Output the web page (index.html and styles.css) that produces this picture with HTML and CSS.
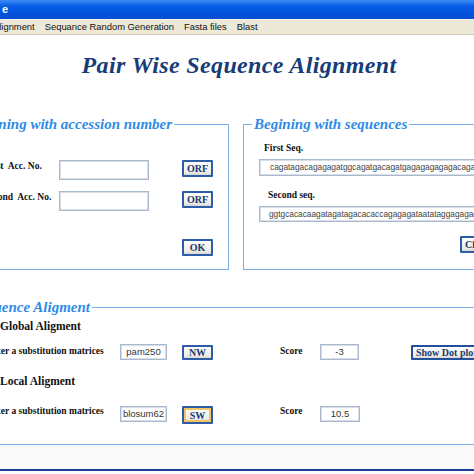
FILE: index.html
```html
<!DOCTYPE html>
<html>
<head>
<meta charset="utf-8">
<link rel="stylesheet" href="styles.css">
</head>
<body>
<div class="titlebar"><span class="title-end">e</span></div>
<div class="menubar">
  <span class="menu-item first">Alignment</span>
  <span class="menu-item">Sequance Random Generation</span>
  <span class="menu-item">Fasta files</span>
  <span class="menu-item">Blast</span>
</div>
<h1 class="heading">Pair Wise Sequence Alignment</h1>
<div class="top-row">
  <fieldset class="box box-acc">
    <legend>Begining with accession number</legend>
    <div class="acc-row">
      <span class="lbl acc-lbl">First&nbsp; Acc. No.</span>
      <span class="field acc-field"></span>
      <button class="btn orf">ORF</button>
    </div>
    <div class="acc-row second">
      <span class="lbl acc-lbl">Second&nbsp; Acc. No.</span>
      <span class="field acc-field"></span>
      <button class="btn orf">ORF</button>
    </div>
    <div class="ok-row">
      <button class="btn orf">OK</button>
    </div>
  </fieldset>
  <fieldset class="box box-seq">
    <legend>Begining with sequences</legend>
    <div class="lbl seq-lbl1">First Seq.</div>
    <div class="field seq-field">cagatagacagagagatggcagatgacagatgagagagagagacagagagacagatag</div>
    <div class="lbl seq-lbl2">Second seq.</div>
    <div class="field seq-field seq2">ggtgcacacaagatagatagacacaccagagagataatataggagagagcacagatag</div>
    <button class="btn clear">Clear</button>
  </fieldset>
</div>
<fieldset class="box box-align">
  <legend>Sequence Aligment</legend>
  <div class="sect">Global Aligment</div>
  <div class="align-row">
    <span class="lbl mat-lbl">Enter a substitution matrices</span>
    <span class="field small">pam250</span>
    <button class="btn nw">NW</button>
    <span class="lbl score">Score</span>
    <span class="field score-val">-3</span>
    <button class="btn dot">Show Dot plot</button>
  </div>
  <div class="sect local">Local Aligment</div>
  <div class="align-row row2">
    <span class="lbl mat-lbl">Enter a substitution matrices</span>
    <span class="field small">blosum62</span>
    <button class="btn nw sw">SW</button>
    <span class="lbl score">Score</span>
    <span class="field score-val">10.5</span>
  </div>
</fieldset>
<div class="footer"></div>
</body>
</html>
```
FILE: styles.css
```css
html, body {
  margin: 0;
  padding: 0;
  background: #ffffff;
  overflow: hidden;
  width: 474px;
  height: 474px;
}
body {
  font-family: "Liberation Serif", serif;
  color: #000;
}
.titlebar {
  height: 19px;
  background: linear-gradient(#3d8ef5 0%, #0a5fe6 30%, #0052dc 70%, #0a4fd0 100%);
  color: #fff;
  font: bold 11px/19px "Liberation Sans", sans-serif;
  padding-left: 2px;
}
.menubar {
  height: 14px;
  background: #ece9d8;
  border-bottom: 1px solid #cfcbbb;
  display: flex;
  gap: 10px;
  font: 9.4px/14px "Liberation Sans", sans-serif;
  color: #111;
  white-space: nowrap;
  border-top: 1px solid #f4f2e8;
}
.menu-item.first { margin-left: -7px; }
.heading {
  margin: 15px 0 0 0;
  text-align: center;
  font: italic bold 24px/30px "Liberation Serif", serif;
  color: #173c78;
  letter-spacing: 0.35px;
  padding-left: 4px;
}
.top-row {
  display: flex;
  gap: 14px;
  margin-top: 36px;
  white-space: nowrap;
}
.box {
  margin: 0;
  border: 1px solid #7bb1e4;
  padding: 0;
  min-width: 0;
}
.box legend {
  padding: 0 2px;
  font: italic bold 15px/16px "Liberation Serif", serif;
  color: #2e8be6;
}
.box-acc {
  margin-left: -36px;
  width: 265px;
  box-sizing: border-box;
  padding: 28px 0 13px 19px;
  flex: none;
}
.box-acc legend { margin-left: -16px; }
.lbl {
  font: bold 9.5px/12px "Liberation Serif", serif;
  color: #111;
}
.acc-row {
  display: flex;
  align-items: flex-start;
}
.acc-row.second { margin-top: 11px; }
.acc-lbl { width: 75px; flex: none; }
.field {
  box-sizing: border-box;
  border: 1px solid #a9b8ca;
  box-shadow: inset 0 0 0 1px #d7dee8;
  background: #fff;
  font: 9px "Liberation Sans", sans-serif;
  color: #333;
  display: block;
  flex: none;
  white-space: nowrap;
  overflow: hidden;
}
.acc-field { width: 90px; height: 20px; }
.btn {
  box-sizing: border-box;
  border: 2px solid #2d5ca8;
  border-radius: 1px;
  background: linear-gradient(#ffffff, #ecebe6 80%, #d8d6cf);
  font: bold 10px "Liberation Serif", serif;
  color: #1b3a6e;
  padding: 0;
  flex: none;
}
.orf { width: 31px; height: 17px; margin-left: 33px; }
.ok-row { margin-top: 26px; padding-left: 198px; }
.ok-row .orf { margin-left: 0; }
.box-seq {
  width: 260px;
  box-sizing: border-box;
  padding: 0 0 13px 15px;
  flex: none;
}
.box-seq legend { margin-left: -7px; }
.seq-lbl1 { margin: 10px 0 0 5px; }
.seq-lbl2 { margin: 13px 0 0 9px; }
.seq-field {
  width: 240px;
  height: 17px;
  margin-top: 5px;
  line-height: 15px;
  padding-left: 10px;
  font-size: 8.3px;
  color: #444;
}
.seq-field.seq2 { height: 16px; line-height: 14px; padding-left: 9px; }
.clear {
  display: block;
  width: 40px;
  height: 17px;
  margin: 14px 0 0 201px;
  text-align: left;
  padding-left: 3px;
}
.box-align {
  margin: 29px 0 0 -33px;
  width: 540px;
  box-sizing: border-box;
  padding: 0 0 20px 32px;
  white-space: nowrap;
}
.box-align legend { margin-left: -31px; }
.sect {
  margin-top: 4px;
  font: bold 11.5px/15px "Liberation Serif", serif;
  color: #111;
}
.sect.local { margin-top: 14px; }
.align-row {
  display: flex;
  align-items: center;
  margin-top: 10px;
  height: 16px;
}
.align-row.row2 { margin-top: 17px; height: 18px; }
.mat-lbl { margin-left: -14px; width: 134px; flex: none; margin-top: -3px; }
.row2 .mat-lbl { margin-top: -8px; }
.small {
  width: 47px;
  height: 16px;
  line-height: 14px;
  text-align: center;
  font-size: 9.5px;
}
.row2 .small { align-self: flex-start; }
.nw { width: 31px; height: 15px; margin-left: 15px; }
.sw {
  height: 18px;
  box-shadow: inset 0 0 0 2px #f3c562;
}
.score { width: 67px; margin-left: 67px; margin-top: -3px; flex: none; }
.row2 .score { margin-top: -8px; }
.score-val {
  width: 39px;
  height: 16px;
  line-height: 14px;
  text-align: center;
  font-size: 9.5px;
  margin-left: -27px;
}
.row2 .score-val { align-self: flex-start; width: 40px; }
.dot {
  width: 70px;
  height: 15px;
  margin-left: 52px;
  text-align: left;
  padding-left: 3px;
  border-color: #234f9c;
}
.footer {
  height: 24px;
  background: #fafafa;
  border-bottom: 2px solid #1f3c98;
}
```
